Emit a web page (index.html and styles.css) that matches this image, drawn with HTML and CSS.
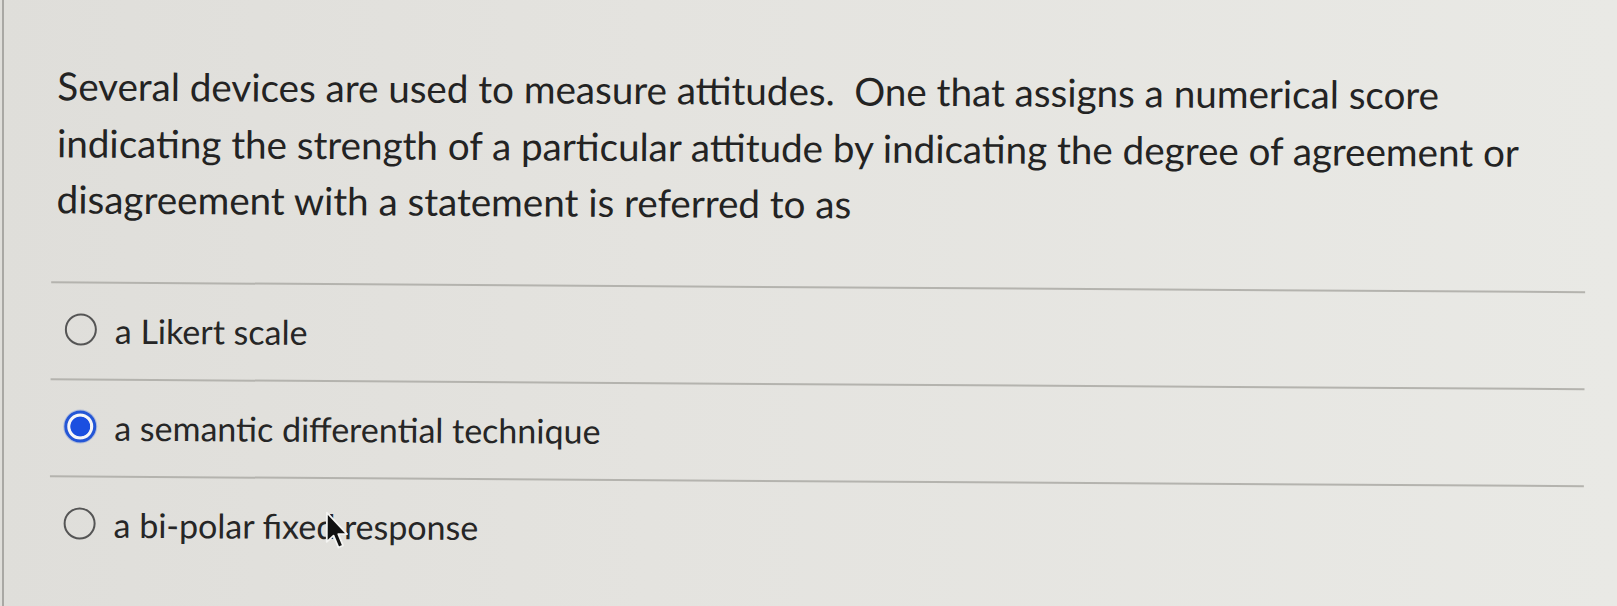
FILE: index.html
```html
<!DOCTYPE html>
<html lang="en">
<head>
<meta charset="utf-8">
<title>Question</title>
<link rel="stylesheet" href="styles.css">
</head>
<body>
<div class="page">
  <div class="sheet">
    <p class="question">Several devices are used to measure attitudes.&nbsp; One that assigns a numerical score indicating the strength of a particular attitude by indicating the degree of agreement or disagreement with a statement is referred to as</p>
    <ul class="options">
      <li class="option">
        <span class="radio"></span>
        <span class="label">a Likert scale</span>
      </li>
      <li class="option">
        <span class="radio checked"></span>
        <span class="label">a semantic differential technique</span>
      </li>
      <li class="option">
        <span class="radio"></span>
        <span class="label label-cursor">a bi-polar fixed response
          <svg class="pointer" width="27" height="41" viewBox="0 0 24 36" aria-hidden="true">
            <path d="M2 2 L2 28 L8 22.5 L12.5 33 L16.5 31.2 L12.2 21 L20 21 Z" fill="#111" stroke="#f4f4f2" stroke-width="1.6" stroke-linejoin="round"/>
          </svg>
        </span>
      </li>
    </ul>
  </div>
</div>
</body>
</html>
```
FILE: styles.css
```css
html, body {
  margin: 0;
  padding: 0;
}

body {
  width: 1617px;
  height: 606px;
  overflow: hidden;
  background: linear-gradient(90deg, #dfdeda 0%, #e4e3df 40%, #e9e9e5 100%);
  font-family: Lato, "Open Sans", "Liberation Sans", sans-serif;
  color: #232323;
}

.page {
  height: 606px;
  margin-left: 2px;
  border-left: 2px solid #a9a8a4;
  box-sizing: border-box;
}

.sheet {
  padding: 57px 30px 0 49px;
  transform: rotate(0.37deg);
  transform-origin: 0 0;
}

.question {
  margin: 0 0 54px 5px;
  max-width: 1500px;
  font-size: 38.6px;
  line-height: 56.5px;
  font-weight: 400;
}

.options {
  list-style: none;
  margin: 0;
  padding: 0;
  width: 1534px;
}

.option {
  display: flex;
  align-items: center;
  gap: 18px;
  box-sizing: content-box;
  border-top: 2px solid #b4b3ae;
  padding: 0 0 3px 14px;
  height: 92px;
}

.radio {
  width: 28px;
  height: 28px;
  border: 2px solid #555;
  border-radius: 50%;
  flex: none;
  box-sizing: content-box;
}

.radio.checked {
  width: 26px;
  height: 26px;
  border: 3px solid #2456d6;
  background: radial-gradient(circle, #1b4fe0 0 9.5px, #f6f6f8 10.3px);
  box-shadow: 0 0 0 1px rgba(36, 86, 214, 0.25);
}

.label {
  font-size: 34px;
  line-height: 42px;
  color: #262626;
  padding-top: 2px;
}

.label-cursor {
  position: relative;
}

.pointer {
  position: absolute;
  left: 211px;
  top: 7px;
}
```
